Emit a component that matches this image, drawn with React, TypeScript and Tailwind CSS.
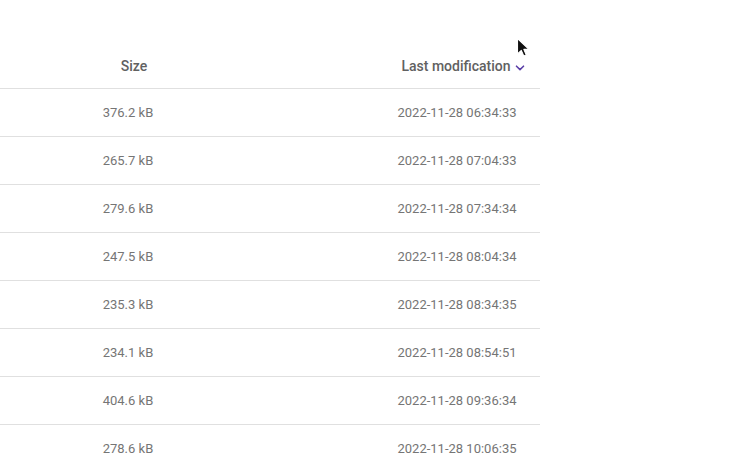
const rows = [
  { size: "376.2 kB", date: "2022-11-28 06:34:33" },
  { size: "265.7 kB", date: "2022-11-28 07:04:33" },
  { size: "279.6 kB", date: "2022-11-28 07:34:34" },
  { size: "247.5 kB", date: "2022-11-28 08:04:34" },
  { size: "235.3 kB", date: "2022-11-28 08:34:35" },
  { size: "234.1 kB", date: "2022-11-28 08:54:51" },
  { size: "404.6 kB", date: "2022-11-28 09:36:34" },
  { size: "278.6 kB", date: "2022-11-28 10:06:35" },
]

function SortIcon() {
  return (
    <svg width="10" height="6" viewBox="0 0 10 6" className="ml-[4px] mt-[3px]">
      <path d="M1.5 1.2 5 4.6 8.5 1.2" fill="none" stroke="#5b3fa8" strokeWidth="1.6" strokeLinecap="round" strokeLinejoin="round" />
    </svg>
  )
}

function Cursor() {
  return (
    <svg width="14" height="21" viewBox="0 0 14 21" className="absolute left-[516px] top-[37px]">
      <path d="M1.5 1.5v15.5l3.8-3.6 2.5 5.6 2.4-1.1-2.4-5.5h5.2z" fill="#111" stroke="#fff" strokeWidth="1.1" strokeLinejoin="round" />
    </svg>
  )
}

export default function App() {
  return (
    <div className="relative h-[471px] w-[729px] overflow-hidden bg-white font-['Roboto',sans-serif]">
      <div className="h-[44px]" />
      <div className="w-[540px]">
        {/* Header */}
        <div className="flex h-[45px] items-center border-b border-[#e0e0e0] text-[14px] font-medium text-[#616161]">
          <div className="w-[256px] pl-[12px] text-center">Size</div>
          <div className="w-[118px]" />
          <div className="flex w-[166px] items-center justify-center pl-[12px]">
            <span>Last modification</span>
            <SortIcon />
          </div>
        </div>

        {/* Rows */}
        {rows.map((r) => (
          <div key={r.date} className="flex h-[48px] items-center border-b border-[#e0e0e0] text-[13px] text-[#757575]">
            <div className="w-[256px] text-center">{r.size}</div>
            <div className="w-[118px]" />
            <div className="w-[166px] text-center">{r.date}</div>
          </div>
        ))}
      </div>
      <Cursor />
    </div>
  )
}
